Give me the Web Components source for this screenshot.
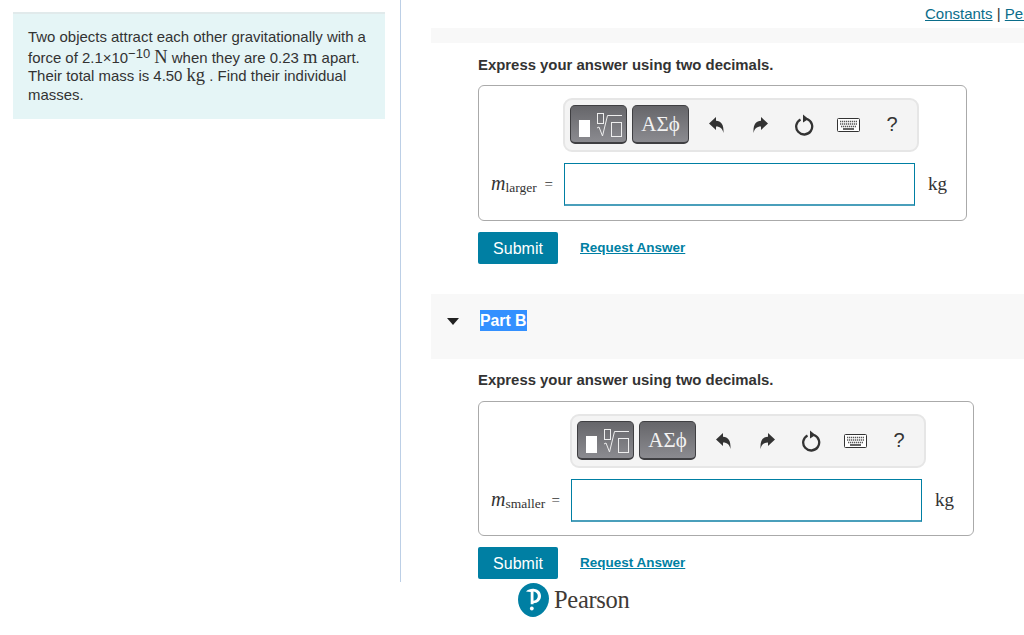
<!DOCTYPE html>
<html><head><meta charset="utf-8"><title>Part</title>
<style>
html,body{margin:0;padding:0;background:#fff;}
body{width:1024px;height:635px;overflow:hidden;display:flex;align-items:flex-start;font-family:"Liberation Sans",Arial,sans-serif;color:#333;}
</style></head><body>
<x-problem>
<x-line>Two objects attract each other gravitationally with a</x-line>
<x-line style="margin-top:2px">force of 2.1×10<sup>−10</sup> <x-m>N</x-m> when they are 0.23 <x-m>m</x-m> apart.</x-line>
<x-line style="margin-top:-1px">Their total mass is 4.50 <x-m>kg</x-m> . Find their individual</x-line>
<x-line>masses.</x-line>
</x-problem>
<x-main>
  <x-answer var="larger" style="--w:489px;--pb:14px;--et:12px;--em:10px"></x-answer>
  <x-part-head>Part B</x-part-head>
  <x-answer var="smaller" style="--w:496px;--pb:13px;--et:11px;--em:11px"></x-answer>
</x-main>
<script>
class Base extends HTMLElement{
  constructor(html){super();this.attachShadow({mode:'open'}).innerHTML=html;}
}
customElements.define('x-m',class extends Base{constructor(){super(`<style>:host{display:inline;font-family:"Liberation Serif",serif;font-size:18.500px;line-height:0;color:#333}</style><slot></slot>`);}});
customElements.define('x-line',class extends Base{constructor(){super(`<style>:host{display:block;white-space:nowrap;height:19px;line-height:19px}
::slotted(sup){font-size:13px;line-height:0;vertical-align:5px}</style><slot></slot>`);}});
customElements.define('x-problem',class extends Base{constructor(){super(`<style>
:host{display:block;box-sizing:border-box;flex:none;width:401px;height:582px;border-right:1px solid #bccfe6;padding:12px 15px 0 13px;}
.card{background:#e5f5f6;border-top:2px solid #e1eaeb;padding:13px 15px 0 15px;font-size:14.950px;color:#333;height:107px;box-sizing:border-box}
</style><div class="card"><slot></slot></div>`);}});
customElements.define('x-main',class extends Base{constructor(){super(`<style>
:host{display:block;flex:1;min-width:0;padding-left:30px;overflow:hidden;height:635px}
.links{height:28px;box-sizing:border-box;padding:6px 0 0 494px;font-size:15px;line-height:16px;white-space:nowrap;color:#333}
.links a{color:#0b6d8a;text-decoration:underline}
.strip{height:15px;background:#f8f8f8}
</style>
<div class="links"><a>Constants</a> | <a>Periodic Table</a></div>
<div class="strip"></div>
<slot></slot>
<x-pearson></x-pearson>`);}});
customElements.define('x-part-head',class extends Base{constructor(){super(`<style>
:host{display:flex;align-items:flex-start;height:65px;background:#f8f8f8;box-sizing:border-box;padding:16px 0 0 16px;margin-top:30px}
.tri{width:0;height:0;border-left:6.5px solid transparent;border-right:6.5px solid transparent;border-top:7px solid #222;margin:8px 20px 0 0}
.t{background:#3390ff;color:#fff;font-weight:700;font-size:15.800px;line-height:21px;margin-left:1px}
</style><span class="tri"></span><span class="t"><slot></slot></span>`);}});
customElements.define('x-tool',class extends Base{constructor(){super(`<style>
:host{display:flex;box-sizing:border-box;width:356px;height:54px;background:#f4f4f4;border:2px solid #e6e6e6;border-radius:9px;padding:5px 5px 0 5px;align-items:flex-start}
.b{box-sizing:border-box;width:57px;height:39px;border-radius:5px;border:1px solid #3f3f42;background:linear-gradient(#66666a,#8b8b90);margin-right:5px;display:flex;align-items:center;justify-content:center;color:#f2f2f2;font:21px/1 "Liberation Serif",serif;flex:none;border-bottom-width:2px}
.i{width:44px;height:39px;flex:none;display:flex;align-items:center;justify-content:center;color:#333;font-size:20px;}
svg{display:block}
</style>
<span class="b"><svg width="55" height="36" viewBox="0 0 55 36"><rect x="8" y="14" width="11" height="17" fill="#fff"/><g fill="none" stroke="#eee" stroke-width="1"><rect x="26.5" y="7.5" width="6" height="10"/><path d="M26 22l2-1 3.500 9L36.500 9.500H51"/><rect x="40.500" y="16.500" width="10" height="14"/></g></svg></span>
<span class="b">ΑΣϕ</span>
<span class="i"><svg width="17" height="18" viewBox="0 0 17 18"><path d="M1 7.500 8 1v3.700c5 .2 8 3.500 7.500 12.300-1-4.300-3-6.500-7.500-6.500V14z" fill="#333"/></svg></span>
<span class="i"><svg width="17" height="18" viewBox="0 0 17 18"><path d="M16 7.500 9 1v3.700C4 4.900 1 8.200 1.500 17c1-4.300 3-6.500 7.500-6.500V14z" fill="#333"/></svg></span>
<span class="i"><svg width="20" height="22" viewBox="0 0 20 22"><path d="M6.500 5.400A8 8 0 1 0 13 5" fill="none" stroke="#333" stroke-width="2.300"/><path d="M9 0.500 14.500 5 9 8.500z" fill="#333"/></svg></span>
<span class="i"><svg width="23" height="14" viewBox="0 0 23 14"><rect x=".5" y=".5" width="22" height="13" rx="1" fill="#fff" stroke="#333"/><path d="M3 3.500h17M3 6h17M4 8.500h15" stroke="#555" stroke-width="1.500" stroke-dasharray="1.300 .7"/><path d="M6 11h11" stroke="#333" stroke-width="1.500"/></svg></span>
<span class="i" style="font-family:'Liberation Sans',sans-serif">?</span>`);}});
customElements.define('x-answer',class extends Base{constructor(){super(`<style>
:host{display:block;padding-left:47px}
.e{font-weight:700;font-size:14.900px;line-height:20px;color:#333;padding-top:var(--et,12px);margin-bottom:var(--em,10px)}
.box{box-sizing:border-box;width:var(--w);display:grid;grid-template-columns:62px 351px auto;column-gap:11px;row-gap:11px;justify-content:start;border:1px solid #aaa;border-radius:6px;padding:12px 0 var(--pb) 12px;align-items:center}
x-tool{grid-column:2 / 4;margin-left:-1px}
.box.wide{grid-template-columns:69px 351px auto}
.lab{font:13.500px "Liberation Serif",serif;color:#333;white-space:nowrap;display:flex;align-items:baseline;margin-top:-2px}
.lab i{font-size:20px}
.lab sub{font-size:13.500px;vertical-align:-2px;line-height:0;position:relative;top:2px}
.lab span{font-size:15px;margin-left:auto;position:relative;top:-1px}
.inp{box-sizing:border-box;height:43px;border:1px solid #007fa3;border-bottom:2px solid #4a9fbb;background:#fff}
.u{font:19px "Liberation Serif",serif;margin-left:2px;margin-top:-2px;color:#333}
.act{display:flex;align-items:center;margin-top:11px}
.sub{box-sizing:border-box;width:80px;height:32px;padding-top:1px;background:#007fa3;border-radius:2px;color:#fff;font-size:16px;display:flex;align-items:center;justify-content:center}
.req{margin-left:22px;font-weight:700;font-size:13.500px;color:#007fa3;text-decoration:underline;position:relative;top:-1px}
</style>
<div class="e">Express your answer using two decimals.</div>
<div class="box" id="box"><x-tool></x-tool>
<div class="lab"><i>m</i><sub id="v"></sub><span>=</span></div><div class="inp"></div><div class="u">kg</div></div>
<div class="act"><span class="sub">Submit</span><span class="req">Request Answer</span></div>`);}
connectedCallback(){const v=this.getAttribute('var');this.shadowRoot.getElementById('v').textContent=v;if(v==='smaller')this.shadowRoot.getElementById('box').classList.add('wide');}});
customElements.define('x-pearson',class extends Base{constructor(){super(`<style>
:host{display:flex;align-items:center;padding-left:87px;margin-top:4px;height:34px}
span{font:24.500px "Liberation Serif",serif;color:#3f3a36;margin-left:5px;letter-spacing:-.3px}
</style><svg width="31" height="34" viewBox="0 0 31 34"><path d="M15.500 0C24 0 31 7 31 15.500 31 26 22 34 15 34 7 34 0 26 0 16.500 0 7 7 0 15.500 0z" fill="#007fa3"/><path d="M8 8.500C10 6.500 13.500 5.500 16.500 6c4 .6 6.500 3.400 6.500 7 0 4.300-3.300 7-7.500 7.300v-2.500c2.600-.3 4.300-2.200 4.300-4.800S18 8.600 15.500 8.400v12.800h-2.800V9z" fill="#fff"/><circle cx="13.800" cy="25.500" r="1.900" fill="#fff"/></svg><span>Pearson</span>`);}});
</script>
</body></html>
